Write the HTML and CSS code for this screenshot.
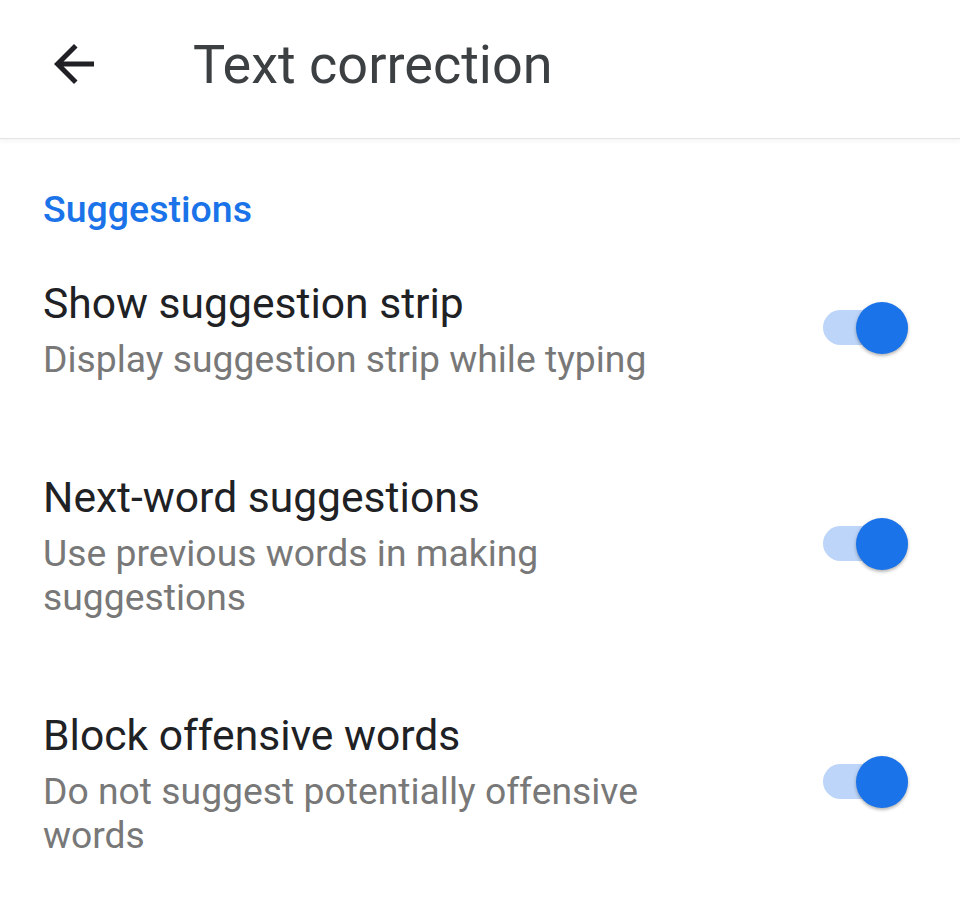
FILE: index.html
```html
<!DOCTYPE html>
<html lang="en">
<head>
<meta charset="utf-8">
<title>Text correction</title>
<link rel="stylesheet" href="styles.css">
</head>
<body>
<header class="app-bar">
  <button class="back" aria-label="Back">
    <svg viewBox="0 0 24 24" width="60" height="60"><path d="M20 11H7.83l5.59-5.59L12 4l-8 8 8 8 1.41-1.41L7.83 13H20v-2z"/></svg>
  </button>
  <h1 class="app-title">Text correction</h1>
</header>

<main class="prefs">
  <h2 class="category">Suggestions</h2>

  <div class="pref">
    <div class="pref-text">
      <div class="pref-title">Show suggestion strip</div>
      <div class="pref-summary">Display suggestion strip while typing</div>
    </div>
    <span class="switch on"><span class="thumb"></span></span>
  </div>

  <div class="pref">
    <div class="pref-text">
      <div class="pref-title">Next-word suggestions</div>
      <div class="pref-summary">Use previous words in making suggestions</div>
    </div>
    <span class="switch on"><span class="thumb"></span></span>
  </div>

  <div class="pref">
    <div class="pref-text">
      <div class="pref-title">Block offensive words</div>
      <div class="pref-summary">Do not suggest potentially offensive words</div>
    </div>
    <span class="switch on"><span class="thumb"></span></span>
  </div>
</main>
</body>
</html>
```

FILE: styles.css
```css
* { box-sizing: border-box; }

html, body {
  margin: 0;
  background: #ffffff;
  font-family: Roboto, "Noto Sans", sans-serif;
}

/* top app bar */
.app-bar {
  height: 138px;
  padding: 0 0 10px 44px;
  display: flex;
  align-items: center;
  background: #ffffff;
  box-shadow: 0 1px 0 #e3e3e3, 0 3px 6px rgba(0, 0, 0, 0.05);
  position: relative;
}

.back {
  width: 60px;
  height: 60px;
  padding: 0;
  border: 0;
  background: none;
  display: flex;
}

.back svg { fill: #202124; }

.app-title {
  margin: 0 0 0 89px;
  font-weight: 400;
  font-size: 54px;
  color: #3c4043;
  letter-spacing: 0;
}

/* preference list */
.prefs {
  padding: 0 52px 0 43px;
}

.category {
  margin: 49px 0 0;
  font-size: 37.5px;
  font-weight: 500;
  line-height: 44px;
  color: #1a73e8;
}

.pref {
  display: flex;
  align-items: center;
  gap: 80px;
  padding: 47px 0 44px;
}

.pref-text {
  flex: 1;
  display: flex;
  flex-direction: column;
  gap: 9px;
}

.pref-title {
  font-size: 42.6px;
  line-height: 50px;
  color: #202124;
}

.pref-summary {
  font-size: 37.3px;
  line-height: 44px;
  color: #787878;
}

/* switch */
.switch {
  flex: none;
  width: 85px;
  height: 35px;
  margin-bottom: 4px;
  border-radius: 18px;
  background: #bcd5f9;
  display: flex;
  align-items: center;
  justify-content: flex-end;
}

.thumb {
  width: 52px;
  height: 52px;
  border-radius: 50%;
  background: #1a73e8;
  box-shadow: 0 2px 3px rgba(0, 0, 0, 0.22), 0 1px 5px rgba(0, 0, 0, 0.1);
}
```
